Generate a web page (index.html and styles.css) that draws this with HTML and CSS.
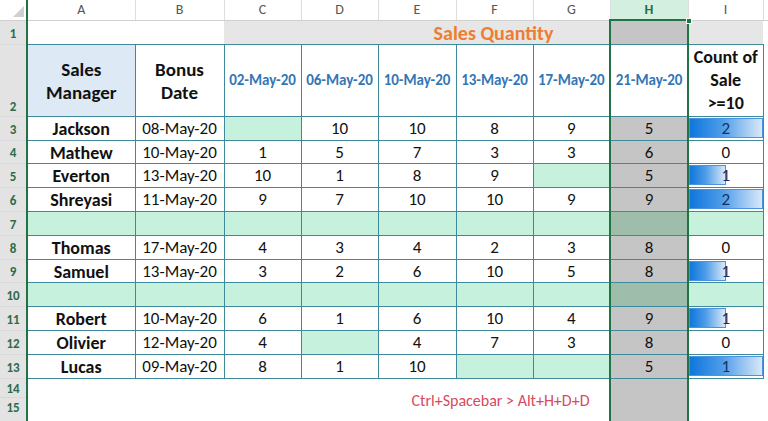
FILE: index.html
```html
<!DOCTYPE html>
<html>
<head>
<meta charset="utf-8">
<link rel="stylesheet" href="styles.css">
</head>
<body>
<table class="sheet">
  <colgroup>
    <col class="w-rh"><col class="w-a"><col class="w-b"><col class="w-c"><col class="w-d"><col class="w-e"><col class="w-f"><col class="w-g"><col class="w-h"><col class="w-i"><col class="w-x">
  </colgroup>
  <tr class="r-hdr">
    <th class="corner"><div class="corner-in"><span class="tri"></span></div></th>
    <th class="ch">A</th><th class="ch">B</th><th class="ch">C</th><th class="ch">D</th><th class="ch">E</th><th class="ch">F</th><th class="ch">G</th>
    <th class="ch ch-sel">H<span class="handle"></span></th><th class="ch">I</th><th class="ch ch-x"></th>
  </tr>
  <tr class="r1">
    <th class="rh">1</th>
    <td></td><td></td>
    <td class="band"></td><td class="band"></td>
    <td class="band title" colspan="3">Sales Quantity</td>
    <td class="sel sel-top h1"></td>
    <td class="band"></td><td></td>
  </tr>
  <tr class="r2">
    <th class="rh rh-bot">2</th>
    <td class="b hA">Sales<br>Manager</td>
    <td class="b hB">Bonus<br>Date</td>
    <td class="b dt">02-May-20</td>
    <td class="b dt">06-May-20</td>
    <td class="b dt">10-May-20</td>
    <td class="b dt">13-May-20</td>
    <td class="b dt">17-May-20</td>
    <td class="b dt sel active">21-May-20</td>
    <td class="b hI">Count of<br>Sale<br>&gt;=10</td>
    <td></td>
  </tr>
  <tr class="rd">
    <th class="rh">3</th>
    <td class="b nm">Jackson</td><td class="b bd">08-May-20</td>
    <td class="b mint"></td><td class="b n">10</td><td class="b n">10</td><td class="b n">8</td><td class="b n">9</td>
    <td class="b n sel">5</td>
    <td class="b cnt"><div class="cnt-in"><span class="bar" style="width:100%"></span><span class="cv on">2</span></div></td>
    <td></td>
  </tr>
  <tr class="rd r-short">
    <th class="rh">4</th>
    <td class="b nm">Mathew</td><td class="b bd">10-May-20</td>
    <td class="b n">1</td><td class="b n">5</td><td class="b n">7</td><td class="b n">3</td><td class="b n">3</td>
    <td class="b n sel">6</td>
    <td class="b cnt"><div class="cnt-in"><span class="cv">0</span></div></td>
    <td></td>
  </tr>
  <tr class="rd">
    <th class="rh">5</th>
    <td class="b nm">Everton</td><td class="b bd">13-May-20</td>
    <td class="b n">10</td><td class="b n">1</td><td class="b n">8</td><td class="b n">9</td><td class="b mint"></td>
    <td class="b n sel">5</td>
    <td class="b cnt"><div class="cnt-in"><span class="bar" style="width:50%"></span><span class="cv on">1</span></div></td>
    <td></td>
  </tr>
  <tr class="rd">
    <th class="rh">6</th>
    <td class="b nm">Shreyasi</td><td class="b bd">11-May-20</td>
    <td class="b n">9</td><td class="b n">7</td><td class="b n">10</td><td class="b n">10</td><td class="b n">9</td>
    <td class="b n sel">9</td>
    <td class="b cnt"><div class="cnt-in"><span class="bar" style="width:100%"></span><span class="cv on">2</span></div></td>
    <td></td>
  </tr>
  <tr class="rd">
    <th class="rh">7</th>
    <td class="b mint"></td><td class="b mint"></td><td class="b mint"></td><td class="b mint"></td><td class="b mint"></td><td class="b mint"></td><td class="b mint"></td>
    <td class="b sel sel-mint"></td>
    <td class="b mint"></td>
    <td></td>
  </tr>
  <tr class="rd">
    <th class="rh">8</th>
    <td class="b nm">Thomas</td><td class="b bd">17-May-20</td>
    <td class="b n">4</td><td class="b n">3</td><td class="b n">4</td><td class="b n">2</td><td class="b n">3</td>
    <td class="b n sel">8</td>
    <td class="b cnt"><div class="cnt-in"><span class="cv">0</span></div></td>
    <td></td>
  </tr>
  <tr class="rd r-short">
    <th class="rh">9</th>
    <td class="b nm">Samuel</td><td class="b bd">13-May-20</td>
    <td class="b n">3</td><td class="b n">2</td><td class="b n">6</td><td class="b n">10</td><td class="b n">5</td>
    <td class="b n sel">8</td>
    <td class="b cnt"><div class="cnt-in"><span class="bar" style="width:50%"></span><span class="cv on">1</span></div></td>
    <td></td>
  </tr>
  <tr class="rd">
    <th class="rh">10</th>
    <td class="b mint"></td><td class="b mint"></td><td class="b mint"></td><td class="b mint"></td><td class="b mint"></td><td class="b mint"></td><td class="b mint"></td>
    <td class="b sel sel-mint"></td>
    <td class="b mint"></td>
    <td></td>
  </tr>
  <tr class="rd">
    <th class="rh">11</th>
    <td class="b nm">Robert</td><td class="b bd">10-May-20</td>
    <td class="b n">6</td><td class="b n">1</td><td class="b n">6</td><td class="b n">10</td><td class="b n">4</td>
    <td class="b n sel">9</td>
    <td class="b cnt"><div class="cnt-in"><span class="bar" style="width:50%"></span><span class="cv on">1</span></div></td>
    <td></td>
  </tr>
  <tr class="rd">
    <th class="rh">12</th>
    <td class="b nm">Olivier</td><td class="b bd">12-May-20</td>
    <td class="b n">4</td><td class="b mint"></td><td class="b n">4</td><td class="b n">7</td><td class="b n">3</td>
    <td class="b n sel">8</td>
    <td class="b cnt"><div class="cnt-in"><span class="cv">0</span></div></td>
    <td></td>
  </tr>
  <tr class="rd">
    <th class="rh">13</th>
    <td class="b nm">Lucas</td><td class="b bd">09-May-20</td>
    <td class="b n">8</td><td class="b n">1</td><td class="b n">10</td><td class="b mint"></td><td class="b mint"></td>
    <td class="b n sel">5</td>
    <td class="b cnt"><div class="cnt-in"><span class="bar" style="width:100%"></span><span class="cv on">1</span></div></td>
    <td></td>
  </tr>
  <tr class="re">
    <th class="rh">14</th>
    <td></td><td></td><td></td><td></td>
    <td class="note" colspan="3" rowspan="2">Ctrl+Spacebar &gt; Alt+H+D+D</td>
    <td class="sel"></td>
    <td></td><td></td>
  </tr>
  <tr class="re-last">
    <th class="rh rh-top">15</th>
    <td></td><td></td><td></td><td></td>
    <td class="sel"></td>
    <td></td><td></td>
  </tr>
</table>
</body>
</html>
```

FILE: styles.css
```css
* { box-sizing: border-box; }

html, body {
  margin: 0;
  padding: 0;
  background: #ffffff;
  overflow: hidden;
}

body {
  font-family: Carlito, Lato, "Open Sans", sans-serif;
  color: #111;
}

.sheet {
  border-collapse: collapse;
  table-layout: fixed;
  width: 768px;
}

.w-rh { width: 27px; }
.w-a { width: 108px; }
.w-b { width: 89px; }
.w-c { width: 77px; }
.w-d { width: 77px; }
.w-e { width: 78px; }
.w-f { width: 77px; }
.w-g { width: 77px; }
.w-h { width: 78px; }
.w-i { width: 75px; }
.w-x { width: 5px; }

td, th {
  padding: 0;
  white-space: nowrap;
  overflow: hidden;
  text-align: center;
  vertical-align: middle;
  line-height: 18px;
}

/* column headers */
.r-hdr { height: 20px; }

.ch {
  font-size: 14px;
  font-weight: normal;
  color: #555;
  background: #ffffff;
  border-right: 1px solid #dedede;
  border-bottom: 1px solid #cfcfcf;
  padding-top: 1px;
}

.ch-sel {
  position: relative;
  overflow: visible;
  background: #d3efdf;
  color: #217346;
  font-weight: bold;
  border-bottom: 2px solid #217346;
}

.handle {
  position: absolute;
  right: -4px;
  bottom: -5px;
  width: 6px;
  height: 6px;
  background: #217346;
  border: 1px solid #fff;
}

.ch-x { border-right: none; }

.corner {
  background: #ffffff;
  border-right: 2px solid #217346;
  border-bottom: 1px solid #cfcfcf;
}

.corner-in {
  display: flex;
  justify-content: flex-end;
  align-items: flex-end;
  height: 19px;
  padding: 0 2px 2px 0;
}

.tri {
  width: 0;
  height: 0;
  border-left: 11px solid transparent;
  border-bottom: 11px solid #d0d0d0;
}

/* row headers */
.rh {
  background: #e3e3e3;
  color: #2c6b4a;
  font-size: 13px;
  font-weight: bold;
  line-height: 15px;
  border-right: 2px solid #217346;
  border-bottom: 1px solid #d9d9d9;
  padding-top: 2px;
}

.rh-bot {
  vertical-align: bottom;
  padding-bottom: 2px;
}

.rh-top {
  vertical-align: top;
  padding-top: 2px;
}

/* rows */
.r1 { height: 24px; }
.r2 { height: 72px; }
.rd { height: 24px; }
.r-short { height: 23px; }
.re { height: 19px; }
.re-last { height: 26px; }

.b {
  border: 1px solid #3e8a9c;
}

.band {
  background: #e7e6e6;
}

.title {
  color: #ed7d31;
  font-weight: bold;
  font-size: 20px;
  line-height: 20px;
  padding-top: 1px;
}

.h1 {
  background: #b3b3b3;
}

.hA {
  background: #dde9f5;
  font-weight: bold;
  font-size: 19px;
  line-height: 23px;
  padding-top: 2px;
}

.hB {
  font-weight: bold;
  font-size: 19px;
  line-height: 23px;
  padding-top: 2px;
}

.hI {
  font-weight: bold;
  font-size: 18px;
  line-height: 23px;
  padding-top: 1px;
}

.dt {
  color: #3476b5;
  font-weight: bold;
  font-size: 15px;
}

.nm {
  font-weight: bold;
  font-size: 18px;
  padding-top: 2px;
}

.bd {
  font-size: 17px;
  padding-top: 2px;
}

.n {
  font-size: 17px;
  padding-top: 2px;
}

.mint {
  background: #c6f1dd;
}

/* selected column H */
.sel {
  background: #c5c5c5;
  border-left: 2px solid #217346;
  border-right: 2px solid #217346;
}

.sel-top { border-top: 2px solid #217346; }

.sel.active { background: #ffffff; }

.sel-mint { background: #9fbdab; }

/* count column with data bars */
.cnt { padding: 0; }

.cnt-in {
  display: grid;
  height: 21px;
  align-items: center;
}

.bar {
  grid-area: 1 / 1;
  justify-self: start;
  height: 20px;
  background: linear-gradient(to right, #0f76dc 0%, #4e9de9 45%, #d9e8f8 100%);
  border: 1px solid #4a93e0;
}

.cv {
  grid-area: 1 / 1;
  justify-self: center;
  font-size: 17px;
  line-height: 18px;
  padding-top: 2px;
}

.cv.on { color: #16305e; }

/* note */
.note {
  color: #d84a5e;
  font-size: 16px;
  vertical-align: top;
  padding-top: 13px;
  padding-left: 14px;
  overflow: visible;
}
```
